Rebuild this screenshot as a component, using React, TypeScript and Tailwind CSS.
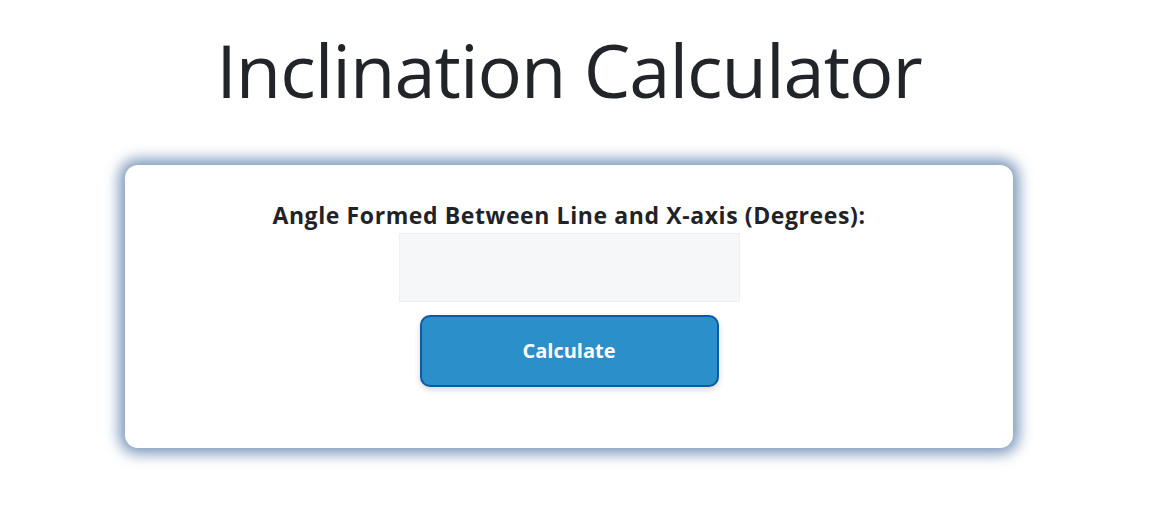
export default function App() {
  return (
    <div className="w-[1138px] min-h-[512px] bg-white font-['Open_Sans',sans-serif] text-[#212529]">
      <h1 className="pt-[26px] text-center text-[74px] leading-[1.2] tracking-[-1px] font-normal">
        Inclination Calculator
      </h1>
      <div className="mx-auto mt-[50px] w-[888px] rounded-[13px] bg-white pt-[34px] pb-[61px] shadow-[0_0_14px_6px_rgba(92,128,172,0.8)]">
        <div className="flex flex-col items-center">
          <label className="text-[23px] leading-[32px] font-bold tracking-[0.6px] text-[#1f2327]">
            Angle Formed Between Line and X-axis (Degrees):
          </label>
          <input
            type="text"
            className="mt-[2px] h-[69px] w-[341px] border border-[#eef0f2] bg-[#f6f7f9] outline-none"
          />
          <button className="mt-[13px] h-[72px] w-[299px] rounded-[10px] border-2 border-[#0b5aa6] bg-[#2b8fc9] text-[20px] font-bold text-white shadow-[0_3px_6px_rgba(0,0,0,0.15)]">
            Calculate
          </button>
        </div>
      </div>
    </div>
  );
}
